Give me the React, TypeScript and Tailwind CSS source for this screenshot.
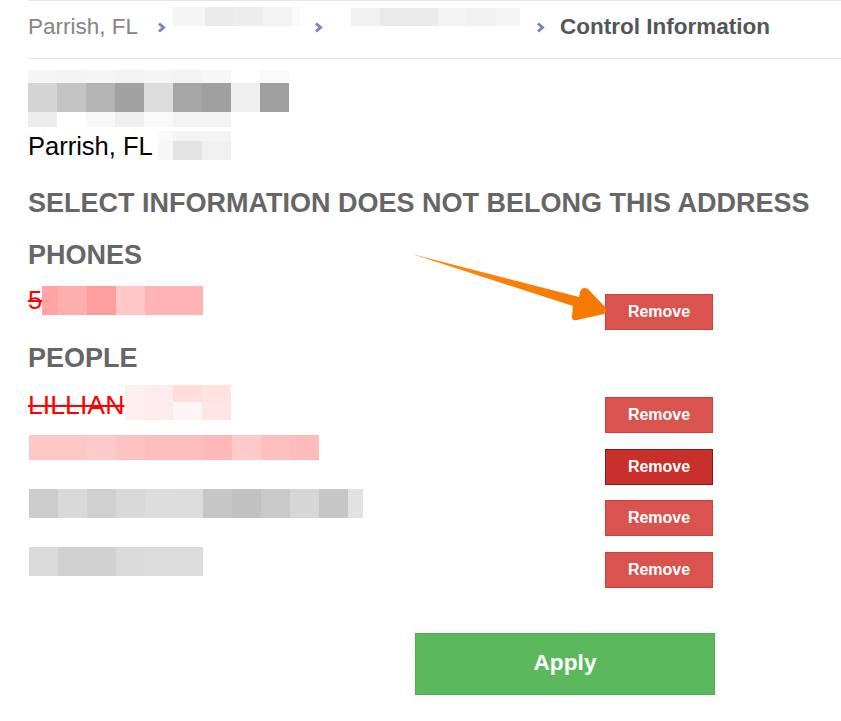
import React from "react";

type Cell = { w: number; c: string };
type Row = { h: number; cells: Cell[] };

function Pix({ rows }: { rows: Row[] }) {
  return (
    <div className="flex flex-col shrink-0">
      {rows.map((r, i) => (
        <div key={i} className="flex" style={{ height: r.h }}>
          {r.cells.map((c, j) => (
            <div key={j} style={{ width: c.w, backgroundColor: c.c }} />
          ))}
        </div>
      ))}
    </div>
  );
}

const cells = (w: number, colors: string[]): Cell[] => colors.map((c) => ({ w, c }));

function Chevron() {
  return (
    <svg width="9" height="11" viewBox="0 0 9 11" className="shrink-0">
      <path d="M2 1.5 L6.5 5.5 L2 9.5" fill="none" stroke="#7b87ba" strokeWidth="3" strokeLinejoin="miter" />
    </svg>
  );
}

function RemoveBtn({ dark, mt }: { dark?: boolean; mt: string }) {
  return (
    <button
      className={
        "w-[108px] h-[36px] shrink-0 border text-white font-bold text-[16px] leading-none " +
        mt +
        " " +
        (dark ? "bg-[#c9302c] border-[#7c1d1a]" : "bg-[#d9534f] border-[#d43f3a]")
      }
    >
      Remove
    </button>
  );
}

export default function App() {
  return (
    <div
      className="relative w-[841px] h-[721px] bg-white overflow-hidden"
      style={{ fontFamily: "'Liberation Sans', Arial, sans-serif" }}
    >
      {/* breadcrumb */}
      <div className="ml-[28px] border-t border-b border-[#e6e6e6] pt-[10px] pb-[15px]">
        <div className="flex items-center h-[32px] text-[22.5px] leading-[32px]">
          <span className="text-[#858585]">Parrish, FL</span>
          <span className="ml-[19px]">
            <Chevron />
          </span>
          <div className="ml-[7px] self-start mt-[-4px]">
            <Pix rows={[{ h: 19, cells: [
              { w: 32, c: "#f5f5f5" }, { w: 29, c: "#ebebeb" }, { w: 29, c: "#ededed" }, { w: 29, c: "#f3f3f3" }, { w: 8, c: "#fafafa" },
            ] }]} />
          </div>
          <span className="ml-[14px]">
            <Chevron />
          </span>
          <div className="ml-[28px] self-start mt-[-3px]">
            <Pix rows={[{ h: 18, cells: [
              { w: 29, c: "#f1f1f1" }, { w: 29, c: "#eaeaea" }, { w: 29, c: "#eaeaea" }, { w: 29, c: "#f4f4f4" }, { w: 29, c: "#f1f1f1" }, { w: 24, c: "#f5f5f5" },
            ] }]} />
          </div>
          <span className="ml-[16px]">
            <Chevron />
          </span>
          <span className="ml-[15px] font-bold text-[#555555]">Control Information</span>
        </div>
      </div>

      <div className="pl-[28px]">
        {/* name block */}
        <div className="mt-[11px]">
          <Pix rows={[
            { h: 13, cells: cells(29, ["#f5f5f5", "#f4f4f4", "#f5f5f5", "#f3f3f3", "#f5f5f5", "#f3f3f3", "#f7f7f7", "#ffffff", "#f9f9f9"]) },
            { h: 29, cells: cells(29, ["#d4d4d4", "#c4c4c4", "#b4b4b4", "#a2a2a2", "#dcdcdc", "#a6a6a6", "#a0a0a0", "#efefef", "#a0a0a0"]) },
            { h: 15, cells: cells(29, ["#ececec", "#ffffff", "#f8f8f8", "#efefef", "#f9f9f9", "#f3f3f3", "#f3f3f3"]) },
          ]} />
        </div>

        {/* city line */}
        <div className="mt-[4px] flex items-start h-[30px]">
          <span className="text-[25.5px] leading-[30px] text-black">Parrish, FL</span>
          <div className="ml-[5px]">
            <Pix rows={[
              { h: 10, cells: [{ w: 15, c: "#fafafa" }, { w: 29, c: "#f4f4f4" }, { w: 29, c: "#f4f4f4" }] },
              { h: 19, cells: [{ w: 15, c: "#f7f7f7" }, { w: 29, c: "#e3e3e3" }, { w: 29, c: "#f0f0f0" }] },
            ]} />
          </div>
        </div>

        <h2 className="mt-[26px] text-[27px] leading-[32px] font-bold text-[#666666]">
          SELECT INFORMATION DOES NOT BELONG THIS ADDRESS
        </h2>

        <h3 className="mt-[20px] text-[27px] leading-[32px] font-bold text-[#666666]">PHONES</h3>

        <div className="w-[685px]">
          {/* phone row */}
          <div className="mt-[15px] flex justify-between items-start">
            <div className="flex items-start">
              <span className="text-[25.5px] leading-[29px] text-[#ff0000] line-through">5</span>
              <Pix rows={[{ h: 29, cells: [
                { w: 16, c: "#ffa5a5" }, { w: 29, c: "#ffaeae" }, { w: 29, c: "#ff9e9e" }, { w: 29, c: "#ffc7c7" }, { w: 29, c: "#ffb3b3" }, { w: 29, c: "#ffb3b3" },
              ] }]} />
            </div>
            <RemoveBtn mt="mt-[8px]" />
          </div>

          <h3 className="mt-[12px] text-[27px] leading-[32px] font-bold text-[#666666]">PEOPLE</h3>

          {/* people row 1 */}
          <div className="mt-[11px] flex justify-between items-start">
            <div className="flex items-end">
              <span className="text-[26.7px] leading-[30px] text-[#ff0000] line-through">LILLIAN</span>
              <div className="ml-[1px]">
                <Pix rows={[
                  { h: 17, cells: [{ w: 19, c: "#fff0f0" }, { w: 29, c: "#ffebeb" }, { w: 29, c: "#ffdddd" }, { w: 29, c: "#ffe3e3" }] },
                  { h: 18, cells: [{ w: 19, c: "#fff0f0" }, { w: 29, c: "#ffebeb" }, { w: 29, c: "#fff5f5" }, { w: 29, c: "#ffe5e5" }] },
                ]} />
              </div>
            </div>
            <RemoveBtn mt="mt-[12px]" />
          </div>

          {/* people row 2 */}
          <div className="mt-[2px] flex justify-between items-start">
            <div className="ml-[1px]">
              <Pix rows={[{ h: 25, cells: cells(29, ["#ffc6c6", "#ffc6c6", "#ffcaca", "#ffc2c2", "#ffbdbd", "#ffbdbd", "#ffb8b8", "#ffcaca", "#ffbfbf", "#ffbaba"]) }]} />
            </div>
            <RemoveBtn dark mt="mt-[14px]" />
          </div>

          {/* people row 3 */}
          <div className="mt-[4px] flex justify-between items-start">
            <div className="ml-[1px]">
              <Pix rows={[{ h: 29, cells: [
                ...cells(29, ["#cccccc", "#d9d9d9", "#d0d0d0", "#d9d9d9", "#dddddd", "#dcdcdc", "#c6c6c6", "#c1c1c1", "#c9c9c9", "#d6d6d6", "#c6c6c6"]),
                { w: 15, c: "#e2e2e2" },
              ] }]} />
            </div>
            <RemoveBtn mt="mt-[11px]" />
          </div>

          {/* people row 4 */}
          <div className="mt-[11px] flex justify-between items-start">
            <div className="ml-[1px]">
              <Pix rows={[{ h: 29, cells: cells(29, ["#dadada", "#d0d0d0", "#d0d0d0", "#dadada", "#dcdcdc", "#dcdcdc"]) }]} />
            </div>
            <RemoveBtn mt="mt-[5px]" />
          </div>
        </div>

        <div className="w-[687px] flex justify-end mt-[45px]">
          <button className="w-[300px] h-[62px] bg-[#5cb85c] border border-[#4cae4c] text-white font-bold text-[22.7px] leading-none pb-[3px]">
            Apply
          </button>
        </div>
      </div>

      {/* annotation arrow */}
      <svg
        className="absolute left-[400px] top-[240px] pointer-events-none"
        width="220"
        height="90"
        viewBox="0 0 220 90"
      >
        <defs>
          <linearGradient id="ag" x1="0" y1="0" x2="1" y2="0">
            <stop offset="0" stopColor="#ff8a12" />
            <stop offset="1" stopColor="#f47700" />
          </linearGradient>
        </defs>
        <path
          d="M12,14 L179,57 L180,52 Q182,46 188,49 L205,67 Q208,71 204,74 L177,80 Q171,81 172,76 L173,66 Z"
          fill="url(#ag)"
        />
      </svg>
    </div>
  );
}
